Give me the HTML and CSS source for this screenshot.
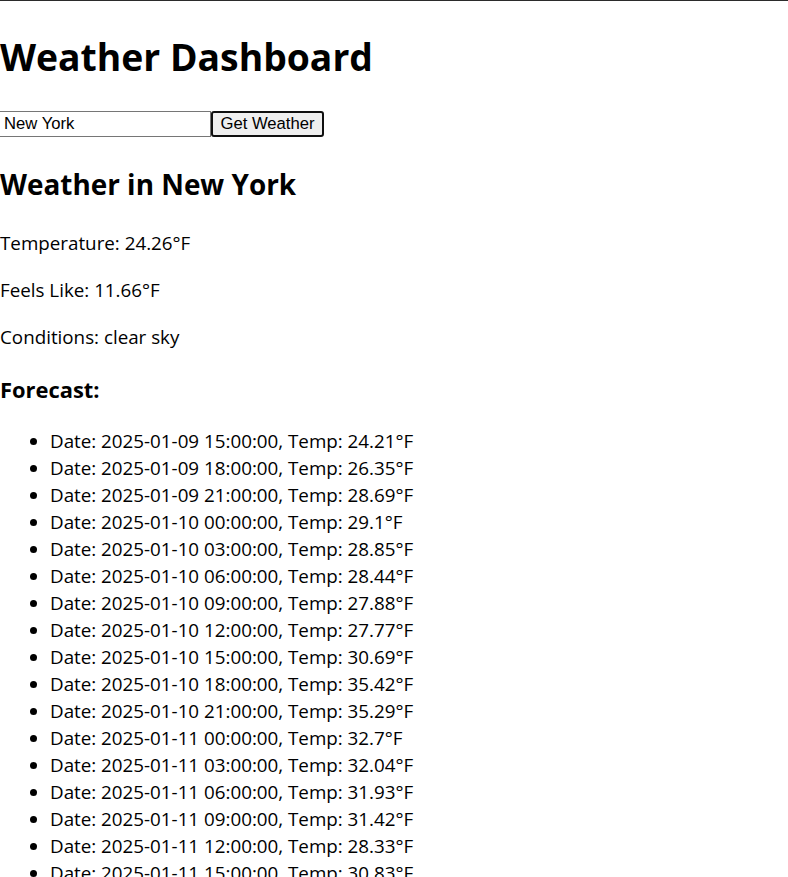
FILE: index.html
```html
<!DOCTYPE html>
<html>
<head>
<meta charset="utf-8">
<title>Weather Dashboard</title>
<link rel="stylesheet" href="styles.css">
</head>
<body>
<h1 class="title">Weather Dashboard</h1>
<div class="search">
<input class="city" type="text" value="New York"><button class="go">Get Weather</button>
</div>
<h2 class="sub">Weather in New York</h2>
<p class="info">Temperature: 24.26°F</p>
<p class="info">Feels Like: 11.66°F</p>
<p class="info">Conditions: clear sky</p>
<h3 class="fc">Forecast:</h3>
<ul class="list">
<li>Date: 2025-01-09 15:00:00, Temp: 24.21°F</li>
<li>Date: 2025-01-09 18:00:00, Temp: 26.35°F</li>
<li>Date: 2025-01-09 21:00:00, Temp: 28.69°F</li>
<li>Date: 2025-01-10 00:00:00, Temp: 29.1°F</li>
<li>Date: 2025-01-10 03:00:00, Temp: 28.85°F</li>
<li>Date: 2025-01-10 06:00:00, Temp: 28.44°F</li>
<li>Date: 2025-01-10 09:00:00, Temp: 27.88°F</li>
<li>Date: 2025-01-10 12:00:00, Temp: 27.77°F</li>
<li>Date: 2025-01-10 15:00:00, Temp: 30.69°F</li>
<li>Date: 2025-01-10 18:00:00, Temp: 35.42°F</li>
<li>Date: 2025-01-10 21:00:00, Temp: 35.29°F</li>
<li>Date: 2025-01-11 00:00:00, Temp: 32.7°F</li>
<li>Date: 2025-01-11 03:00:00, Temp: 32.04°F</li>
<li>Date: 2025-01-11 06:00:00, Temp: 31.93°F</li>
<li>Date: 2025-01-11 09:00:00, Temp: 31.42°F</li>
<li>Date: 2025-01-11 12:00:00, Temp: 28.33°F</li>
<li>Date: 2025-01-11 15:00:00, Temp: 30.83°F</li>
<li>Date: 2025-01-11 18:00:00, Temp: 33.6°F</li>
<li>Date: 2025-01-11 21:00:00, Temp: 33.12°F</li>
</ul>
</body>
</html>
```

FILE: styles.css
```css
html, body {
  margin: 0;
  padding: 0;
  background: #ffffff;
}
body {
  border-top: 1px solid #2b2b2b;
  font-family: "Open Sans", "Noto Sans", sans-serif;
  font-size: 18.8px;
  line-height: 27px;
  color: #000;
  overflow: hidden;
}
.title {
  font-size: 37.3px;
  line-height: 53.2px;
  font-weight: 700;
  margin: 26.8px 0 24.8px;
  padding-top: 2px;
}
.search {
  height: 32px;
}
.city {
  box-sizing: border-box;
  width: 211px;
  height: 26px;
  margin: 3px 0 0 0;
  padding: 1px 2px 0 4px;
  border: 1px solid #767676;
  border-left-width: 0;
  font-family: "Liberation Sans", Arial, sans-serif;
  font-size: 16.67px;
  color: #000;
  vertical-align: top;
  outline: none;
}
.go {
  box-sizing: border-box;
  width: 113px;
  height: 26px;
  margin: 3px 0 0 0;
  padding: 1px 7px 0;
  border: 2px solid #101010;
  border-radius: 3px;
  background: #efefef;
  font-family: "Liberation Sans", Arial, sans-serif;
  font-size: 16.67px;
  color: #000;
  vertical-align: top;
}
.sub {
  font-size: 27.9px;
  line-height: 40px;
  font-weight: 700;
  margin: 23.9px 0 25.9px;
}
.info {
  margin: 20px 0;
}
.fc {
  font-size: 21.9px;
  line-height: 31px;
  font-weight: 700;
  margin: 23.4px 0;
}
.list {
  margin: 20px 0;
  padding-left: 50px;
}
```
